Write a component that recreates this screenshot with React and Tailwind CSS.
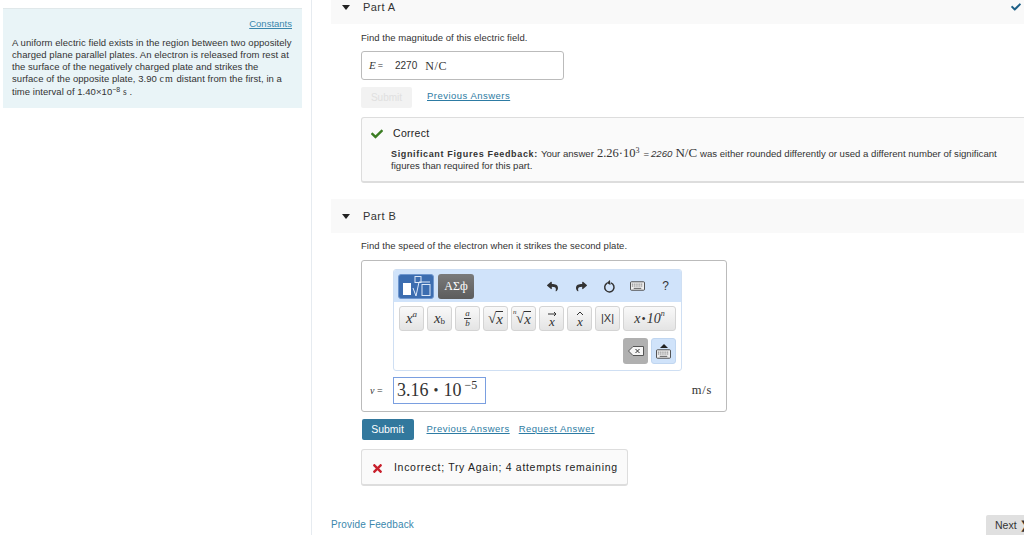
import { FaCheck, FaTimes, FaReply, FaShare } from 'react-icons/fa';

const serif = "font-['Liberation_Serif',serif]";

function KeyboardIcon({ className }) {
  return (
    <svg viewBox="0 0 16 10" className={className}>
      <rect x="0.5" y="0.5" width="15" height="9" rx="1" fill="#eee" stroke="#444" />
      <path d="M2 3h12M2 5h12" stroke="#555" strokeWidth="1" strokeDasharray="1 1" />
      <path d="M4 7.5h8" stroke="#555" strokeWidth="1" />
    </svg>
  );
}

function MathKey({ children, wide }) {
  return (
    <div className={`h-[25px] ${wide ? 'w-[53px]' : 'w-[25px]'} flex items-center justify-center rounded-[3px] border border-[#d4d4d4] bg-gradient-to-b from-[#f9f9f9] to-[#e4e4e4] text-[#333] ${serif} italic text-[15px] leading-none`}>
      {children}
    </div>
  );
}

function Root({ index }) {
  return (
    <span className="relative flex items-start text-[15px] leading-none">
      {index && <span className="absolute -left-[3px] -top-[2px] text-[7px]">n</span>}
      <span className="not-italic">√</span>
      <span className="border-t border-[#333] leading-[14px]">x</span>
    </span>
  );
}

function Toolbar() {
  return (
    <div className="ml-[31px] w-[289px] h-[102px] rounded-[3px] border border-[#cfdff3] overflow-hidden">
      <div className="h-[32px] bg-[#d0e3fa] flex items-center pl-[4px]">
        <div className="w-[36px] h-[25px] rounded-[3px] bg-[#3c6db0] border border-[#6f97cf]">
          <svg viewBox="0 0 34 23" className="w-[34px] h-[23px]">
            <rect x="4" y="8" width="8" height="12" fill="#fff" />
            <rect x="16" y="1.5" width="6" height="6" fill="none" stroke="#dce8f8" />
            <path d="M14 13l3 8 3-14h11" fill="none" stroke="#dce8f8" />
            <rect x="23" y="9.5" width="8" height="11" fill="none" stroke="#dce8f8" />
          </svg>
        </div>
        <div className={`ml-[4px] w-[36px] h-[25px] rounded-[3px] bg-gradient-to-b from-[#7a7a7a] to-[#5c5c5c] text-white text-[12px] flex items-center justify-center ${serif}`}>
          ΑΣф
        </div>
        <div className="ml-auto flex items-center pr-[12px] text-[#333]">
          <FaReply className="w-[11px] h-[11px] mr-[18px]" />
          <FaShare className="w-[11px] h-[11px] mr-[16px]" />
          <svg viewBox="0 0 14 14" className="w-[13px] h-[13px] mr-[14px]">
            <path d="M8.5 3.1a5 5 0 1 1-4 .3" fill="none" stroke="#333" strokeWidth="1.6" />
            <path d="M7.5 0l-3.6 3.2 4.2 2.2z" fill="#333" />
          </svg>
          <KeyboardIcon className="w-[15px] h-[10px] mr-[17px]" />
          <span className="text-[12px] font-['Liberation_Sans',sans-serif]">?</span>
        </div>
      </div>
      <div className="bg-white px-[5px] pt-[4px]">
        <div className="flex gap-[3px]">
          <MathKey>x<sup className="text-[9px] -top-[5px]">a</sup></MathKey>
          <MathKey>x<sub className="text-[9px] not-italic -bottom-[2px]">b</sub></MathKey>
          <MathKey>
            <span className="flex flex-col items-center text-[9px] leading-[9px]">
              <span className="border-b border-[#333] px-[1px]">a</span>
              <span>b</span>
            </span>
          </MathKey>
          <MathKey><Root /></MathKey>
          <MathKey><Root index /></MathKey>
          <MathKey>
            <svg viewBox="0 0 12 18" className="w-[12px] h-[18px]">
              <path d="M2 4h8M8 2l2 2-2 2" fill="none" stroke="#333" />
              <text x="6" y="16" textAnchor="middle" fontSize="13" fontStyle="italic" fontFamily="Liberation Serif" fill="#333">x</text>
            </svg>
          </MathKey>
          <MathKey>
            <svg viewBox="0 0 12 18" className="w-[12px] h-[18px]">
              <path d="M3 5l3-3 3 3" fill="none" stroke="#333" />
              <text x="6" y="16" textAnchor="middle" fontSize="13" fontStyle="italic" fontFamily="Liberation Serif" fill="#333">x</text>
            </svg>
          </MathKey>
          <MathKey><span className="text-[11px] font-['Liberation_Sans',sans-serif] not-italic">|X|</span></MathKey>
          <MathKey wide><span className="text-[14px]">x</span><span className="mx-[1px] not-italic text-[12px]">•</span><span className="text-[14px]">10</span><sup className="text-[8px] -top-[5px]">n</sup></MathKey>
        </div>
        <div className="flex justify-end gap-[3px] mt-[7px]">
          <div className="w-[25px] h-[26px] rounded-[3px] bg-[#b0b0b0] flex items-center justify-center">
            <svg viewBox="0 0 16 10" className="w-[16px] h-[10px]">
              <path d="M5 .5h10.5v9H5L.5 5z" fill="#f5f5f5" stroke="#555" />
              <path d="M7.5 3l4 4M11.5 3l-4 4" stroke="#333" />
            </svg>
          </div>
          <div className="w-[25px] h-[26px] rounded-[3px] bg-[#d0e3fa] border border-[#c0d6f0] flex flex-col items-center justify-center gap-[1px]">
            <div className="w-0 h-0 border-x-[4px] border-x-transparent border-b-[4px] border-b-[#222]" />
            <KeyboardIcon className="w-[15px] h-[10px]" />
          </div>
        </div>
      </div>
    </div>
  );
}

function PartHeader({ children, check, className }) {
  return (
    <div className={`flex items-center bg-[#f9f9f9] ${className}`}>
      <div className="ml-[11px] w-0 h-0 border-x-[4.5px] border-x-transparent border-t-[5px] border-t-[#222]" />
      <span className="ml-[13px] text-[11px] tracking-[0.45px] text-[#333]">{children}</span>
      {check && <FaCheck className="ml-auto mr-[3px] w-[10px] h-[10px] text-[#1c5f86]" />}
    </div>
  );
}

function Link({ children }) {
  return <a className="text-[9.5px] tracking-[0.48px] text-[#2d7ba3] underline">{children}</a>;
}

export default function App() {
  return (
    <div className="w-[1024px] h-[535px] overflow-hidden bg-white flex font-['Liberation_Sans',sans-serif] text-[#333]">
      {/* left column */}
      <div className="w-[312px] shrink-0 border-r border-[#e6ebf0] pl-[3px] pt-[8px]">
        <div className="w-[299px] h-[100px] bg-[#e9f4f7] border-t border-[#e0e8ea] pl-[9px] pr-[10px] pt-[9px]">
          <div className="text-right text-[9.5px] leading-[12px] text-[#3a87ad] underline">Constants</div>
          <p className="mt-[7px] text-[9.5px] leading-[12px] text-[#333] tracking-[0.05px] whitespace-nowrap">
            A uniform electric field exists in the region between two oppositely<br />
            charged plane parallel plates. An electron is released from rest at<br />
            the surface of the negatively charged plate and strikes the<br />
            surface of the opposite plate, 3.90 <span className={`${serif} tracking-[1px] text-[10px]`}>cm</span> distant from the first, in a<br />
            <span className="relative top-[1px]">time interval of 1.40×10<sup className="text-[7px]">−8</sup> <span className={serif}>s</span> .</span>
          </p>
        </div>
      </div>

      {/* right column */}
      <div className="flex-1 min-w-0 pl-[19px] relative">
        <PartHeader check className="h-[24px] pb-[10px]">Part A</PartHeader>
        <div className="pl-[30px]">
          <p className="mt-[8px] text-[9.5px] leading-[12px] tracking-[0.04px]">Find the magnitude of this electric field.</p>
          <div className="mt-[7px] w-[203px] h-[29px] rounded-[3px] border border-[#bbb] flex items-center pl-[7px] text-[10px]">
            <span className={`${serif} italic text-[11px]`}>E</span>
            <span className="ml-[2px] text-[9px]">=</span>
            <span className="ml-[12px]">2270</span>
            <span className={`ml-[8px] text-[12px] tracking-[0.6px] ${serif}`}>N/C</span>
          </div>
          <div className="mt-[7px] flex items-center">
            <div className="w-[51px] h-[21px] rounded-[2px] bg-[#f2f2f2] text-[#e0e0e0] text-[10px] flex items-center justify-center">Submit</div>
            <span className="ml-[15px] flex -mt-[2px]"><Link>Previous Answers</Link></span>
          </div>
          <div className="mt-[9px] h-[66px] -mr-[6px] rounded-l-[3px] border border-[#ddd] border-b-2 bg-[#fafafa] pl-[9px] pt-[9px]">
            <div className="flex items-center h-[14px]">
              <FaCheck className="w-[12px] h-[12px] text-[#3b7d23]" />
              <span className="ml-[10px] text-[10.5px] tracking-[0.3px] text-[#222]">Correct</span>
            </div>
            <div className="ml-[20px] mt-[5px] text-[9.6px] leading-[13px] whitespace-nowrap">
              <div className="flex items-baseline">
                <span className="font-bold text-[9px] tracking-[0.65px] mr-[3px]">Significant Figures Feedback:</span>
                <span>Your answer</span>
                <span className={`${serif} ml-[3px] text-[12.5px]`}>2.26·10<sup className="text-[8px]">3</sup></span>
                <span className="ml-[4px]">=</span>
                <span className="ml-[2px] italic">2260</span>
                <span className={`${serif} mx-[3px] text-[13px]`}>N/C</span>
                <span>was either rounded differently or used a different number of significant</span>
              </div>
              <div className="-mt-[2px]">figures than required for this part.</div>
            </div>
          </div>
        </div>

        <PartHeader className="h-[34px] mt-[16px]">Part B</PartHeader>
        <div className="pl-[30px]">
          <p className="mt-[7px] text-[9.5px] leading-[12px] tracking-[0.04px]">Find the speed of the electron when it strikes the second plate.</p>
          <div className="mt-[8px] w-[366px] h-[152px] rounded-[3px] border border-[#bbb] pt-[8px]">
            <Toolbar />
            <div className="mt-[6px] flex items-center">
              <span className={`ml-[8px] w-[23px] text-[10px] ${serif}`}><i>v</i> =</span>
              <div className={`w-[93px] h-[27px] border border-[#7a9fe0] flex items-center pl-[3px] text-[18px] ${serif}`}>
                3.16<span className="mx-[5px] text-[14px]">•</span>10<sup className="ml-[3px] text-[12px] -top-[6px]">−5</sup>
              </div>
              <span className={`ml-auto mr-[14px] text-[12.5px] tracking-[0.7px] ${serif}`}>m/s</span>
            </div>
          </div>
          <div className="mt-[7px] flex items-center">
            <div className="ml-[0.5px] w-[52px] h-[21px] rounded-[2px] bg-[#32789d] text-white text-[10.5px] flex items-center justify-center">Submit</div>
            <span className="ml-[13px] flex gap-[9px]">
              <Link>Previous Answers</Link>
              <Link>Request Answer</Link>
            </span>
          </div>
          <div className="mt-[9px] w-[267px] h-[37px] rounded-[3px] border border-[#ddd] border-b-2 bg-[#fafafa] flex items-center pl-[9px] pt-[2px]">
            <FaTimes className="w-[13px] h-[13px] text-[#c8202c]" />
            <span className="ml-[10px] text-[10.5px] tracking-[0.7px] text-[#222]">Incorrect; Try Again; 4 attempts remaining</span>
          </div>
        </div>

        <div className="mt-[31px] flex items-center">
          <a className="text-[10px] tracking-[0.15px] text-[#3a87ad]">Provide Feedback</a>
        </div>
        <div className="absolute right-0 bottom-0 w-[38px] h-[20px] bg-[#e0e0e0] rounded-tl-[2px] flex items-center pl-[9px] pt-[1px] text-[10.5px] whitespace-nowrap overflow-hidden">
          Next <span className="ml-[3px] font-bold">❯</span>
        </div>
      </div>
    </div>
  );
}
